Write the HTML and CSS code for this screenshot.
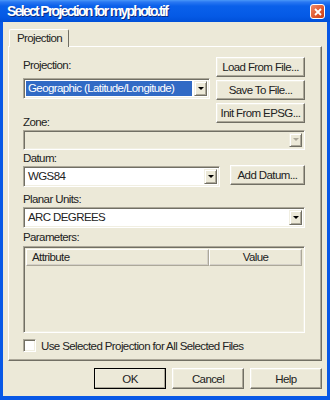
FILE: index.html
```html
<!DOCTYPE html>
<html lang="en">
<head>
  <meta charset="UTF-8" />
  <title>Select Projection for myphoto.tif</title>
  <link rel="stylesheet" href="styles.css">
</head>
<body>
  <div class="window">
    <div class="titlebar">
      <span class="title">Select Projection for myphoto.tif</span>
      <span class="close">
        <svg width="8" height="8" viewBox="0 0 8 8"><path d="M1 1L7 7M7 1L1 7" stroke="#fff" stroke-width="1.8"/></svg>
      </span>
    </div>
    <div class="client">
      <div class="tabs">
        <div class="tab">Projection</div>
      </div>
      <div class="panel">
        <div class="top">
          <div class="left">
            <div class="label first">Projection:</div>
            <div class="combo">
              <span class="field selected">Geographic (Latitude/Longitude)</span>
              <span class="drop"><span class="arrow"></span></span>
            </div>
            <div class="label zone">Zone:</div>
          </div>
          <div class="side">
            <button class="btn">Load From File...</button>
            <button class="btn">Save To File...</button>
            <button class="btn">Init From EPSG...</button>
          </div>
        </div>

        <div class="combo disabled">
          <span class="field"></span>
          <span class="drop"><span class="arrow"></span></span>
        </div>

        <div class="label">Datum:</div>
        <div class="row">
          <div class="combo white datum">
            <span class="field">WGS84</span>
            <span class="drop"><span class="arrow"></span></span>
          </div>
          <button class="btn add">Add Datum...</button>
        </div>

        <div class="label planar">Planar Units:</div>
        <div class="combo white units">
          <span class="field">ARC DEGREES</span>
          <span class="drop"><span class="arrow"></span></span>
        </div>

        <div class="label params">Parameters:</div>
        <div class="list">
          <div class="head">
            <span class="col attr">Attribute</span>
            <span class="col val">Value</span>
          </div>
        </div>

        <label class="check">
          <span class="box"></span>
          Use Selected Projection for All Selected Files
        </label>
      </div>

      <div class="buttons">
        <button class="btn big default">OK</button>
        <button class="btn big">Cancel</button>
        <button class="btn big">Help</button>
      </div>
    </div>
  </div>
</body>
</html>
```

FILE: styles.css
```css
body {
  margin: 0;
  font-family: "Liberation Sans", Arial, sans-serif;
  font-size: 11.5px;
  letter-spacing: -0.6px;
  color: #222;
}
.window {
  width: 330px;
  height: 400px;
  display: flex;
  flex-direction: column;
}
.titlebar {
  height: 22px;
  flex: none;
  display: flex;
  align-items: center;
  justify-content: space-between;
  padding: 0 5px 0 7px;
  background: linear-gradient(#4a98f8 0, #2a78f2 2px, #0a60ea 6px, #055ae6 16px, #0050d8 22px);
}
.title {
  color: #fff;
  font-weight: bold;
  font-size: 14px;
  letter-spacing: -1.7px;
  text-shadow: 1px 1px 0 #0a2a80;
}
.close {
  width: 13px;
  height: 13px;
  margin-top: 1px;
  border: 1px solid #fff;
  border-radius: 3px;
  background: linear-gradient(135deg, #f08a6a, #e05a30 55%, #c83c18);
  display: flex;
  align-items: center;
  justify-content: center;
}
.client {
  flex: 1;
  background: #ece9d8;
  border: solid #0858e6;
  border-width: 0 3px 4px 3px;
  padding: 7px 5px 0 5px;
  display: flex;
  flex-direction: column;
}
.tabs {
  display: flex;
  padding-left: 1px;
  height: 17px;
}
.tab {
  position: relative;
  z-index: 1;
  height: 18px;
  box-sizing: border-box;
  padding: 0 6px 0 7px;
  line-height: 17px;
  background: #ece9d8;
  border: 1px solid #fff;
  border-right-color: #716f64;
  border-bottom: none;
  border-radius: 2px 2px 0 0;
}
.panel {
  border: 1px solid #fff;
  border-right-color: #716f64;
  border-bottom-color: #716f64;
  box-shadow: inset -1px -1px 0 #aca899;
  padding: 10px 16px 8px 14px;
  height: 315px;
  box-sizing: border-box;
  display: flex;
  flex-direction: column;
}
.top {
  display: flex;
  gap: 6px;
}
.left {
  flex: 1;
  display: flex;
  flex-direction: column;
}
.side {
  width: 89px;
  display: flex;
  flex-direction: column;
  gap: 3px;
}
.label {
  height: 13px;
  line-height: 13px;
  margin-top: 2px;
}
.label.zone {
  margin-top: 17px;
}
.label.planar {
  margin-top: 6px;
}
.label.params {
  margin-top: 3px;
}
.combo {
  height: 21px;
  box-sizing: border-box;
  margin-top: 6px;
  border: 1px solid;
  border-color: #aca899 #fff #fff #aca899;
  box-shadow: inset 1px 1px 0 #716f64, inset -1px -1px 0 #f1efe2;
  display: flex;
  align-items: center;
  padding: 2px;
  background: #fff;
}
.combo .field {
  flex: 1;
  align-self: stretch;
  line-height: 15px;
  padding-left: 2px;
  white-space: nowrap;
  overflow: hidden;
}
.combo .field.selected {
  background: #316ac5;
  color: #fff;
  margin-right: 2px;
}
.combo.disabled {
  margin-top: 1px;
  height: 20px;
  background: #ece9d8;
}
.combo.disabled .arrow {
  border-top-color: #aca899;
}
.combo.units {
  margin-top: 1px;
}
.drop {
  width: 13px;
  align-self: stretch;
  box-sizing: border-box;
  background: #ece9d8;
  border: 1px solid;
  border-color: #f1efe2 #716f64 #716f64 #f1efe2;
  box-shadow: inset 1px 1px 0 #fff, inset -1px -1px 0 #aca899;
  display: flex;
  align-items: center;
  justify-content: center;
}
.arrow {
  width: 0;
  height: 0;
  border-left: 3px solid transparent;
  border-right: 3px solid transparent;
  border-top: 3px solid #000;
}
.row {
  display: flex;
  gap: 10px;
}
.combo.datum {
  flex: 1;
  margin-top: 1px;
}
.btn {
  font: inherit;
  letter-spacing: inherit;
  color: #222;
  height: 20px;
  padding: 0;
  background: #ece9d8;
  border: 1px solid;
  border-color: #fff #716f64 #716f64 #fff;
  box-shadow: inset -1px -1px 0 #aca899, inset 1px 1px 0 #f1efe2;
}
.btn.add {
  width: 75px;
}
.list {
  margin-top: 2px;
  height: 89px;
  box-sizing: border-box;
  border: 1px solid;
  border-color: #aca899 #fff #fff #aca899;
  box-shadow: inset 1px 1px 0 #716f64, inset -1px -1px 0 #f1efe2;
  padding: 2px 2px 0 2px;
}
.head {
  display: flex;
  height: 17px;
}
.col {
  height: 17px;
  box-sizing: border-box;
  line-height: 15px;
  border: 1px solid;
  border-color: #fff #aca899 #aca899 #fff;
  box-shadow: inset -1px -1px 0 #d4d0c8;
}
.col.attr {
  width: 183px;
  padding-left: 5px;
}
.col.val {
  flex: 1;
  text-align: center;
}
.check {
  display: flex;
  align-items: center;
  gap: 5px;
  margin-top: 6px;
  height: 13px;
}
.box {
  width: 13px;
  height: 13px;
  box-sizing: border-box;
  background: #fff;
  border: 1px solid;
  border-color: #aca899 #fff #fff #aca899;
  box-shadow: inset 1px 1px 0 #716f64, inset -1px -1px 0 #f1efe2;
}
.buttons {
  display: flex;
  justify-content: flex-end;
  gap: 6px;
  margin-top: 7px;
}
.btn.big {
  width: 72px;
  height: 21px;
}
.btn.default {
  outline: 1px solid #000;
  outline-offset: -1px;
}
```
